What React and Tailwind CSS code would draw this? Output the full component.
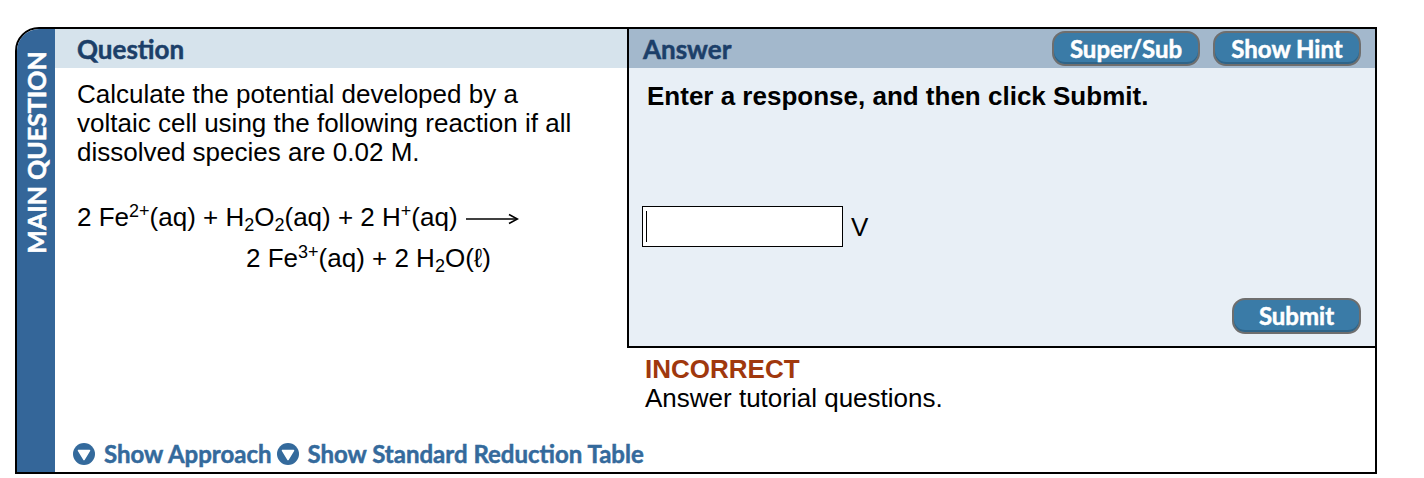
import React from "react";

const myriad = "font-['Lato','Open_Sans',sans-serif] font-bold [-webkit-text-stroke:0.5px]";
const arial = "font-['Liberation_Sans',Arial,sans-serif]";

function PillButton({ children, className = "" }) {
  return (
    <button
      className={`${myriad} flex items-center justify-center rounded-[13px] border-2 border-[#6e6e6e] bg-[#3a7ba7] text-[24px] leading-none text-white shadow-[inset_0_-2px_0_#2f6488] ${className}`}
    >
      {children}
    </button>
  );
}

function DownCircle() {
  return (
    <svg width="22" height="22" viewBox="0 0 22 22" className="shrink-0">
      <circle cx="11" cy="11" r="11" fill="#346a9c" />
      <path d="M5.5 7.5 H16.5 L11 16.5 Z" fill="#fff" stroke="#fff" strokeWidth="1.5" strokeLinejoin="round" />
    </svg>
  );
}

function LongArrow() {
  return (
    <svg width="54" height="14" viewBox="0 0 54 14" className="inline-block align-middle">
      <path d="M1 7 H52" stroke="#000" strokeWidth="1.6" />
      <path d="M44 2.5 L52.5 7 L44 11.5" fill="none" stroke="#000" strokeWidth="1.6" />
    </svg>
  );
}

export default function App() {
  return (
    <div className="min-h-screen bg-white pl-[15px] pt-[27px]">
      <div className="flex h-[447px] w-[1362px] overflow-hidden rounded-tl-[24px] border-2 border-black">
        {/* Sidebar */}
        <div className="flex w-[38px] shrink-0 items-start justify-center bg-[#346699]">
          <div className="mt-[23px] flex h-[200px] w-[38px] items-center justify-center">
            <span className={`${myriad} -rotate-90 whitespace-nowrap text-[25px] leading-none text-white`}>
              MAIN QUESTION
            </span>
          </div>
        </div>

        {/* Question column */}
        <div className="flex w-[572px] shrink-0 flex-col">
          <div className="flex h-[39px] items-center bg-[#d6e3ec] pl-[22px]">
            <h2 className={`${myriad} text-[26px] leading-none text-[#1c3f69]`}>Question</h2>
          </div>
          <div className={`${arial} pl-[22px] pt-[12px] text-[26px] leading-[29px] text-black`}>
            <p>
              Calculate the potential developed by a<br />
              voltaic cell using the following reaction if all<br />
              dissolved species are 0.02 M.
            </p>
            <div className="mt-[30px] leading-[41px]">
              <div>
                2 Fe<sup className="text-[18px]">2+</sup>(aq) + H<sub className="text-[18px]">2</sub>O
                <sub className="text-[18px]">2</sub>(aq) + 2 H<sup className="text-[18px]">+</sup>(aq){" "}
                <LongArrow />
              </div>
              <div className="pl-[169px]">
                2 Fe<sup className="text-[18px]">3+</sup>(aq) + 2 H<sub className="text-[18px]">2</sub>O(ℓ)
              </div>
            </div>
          </div>
          <div className="flex-1" />
          <div
            className={`${myriad} flex items-center gap-[2px] whitespace-nowrap pb-[6px] pl-[18px] text-[24px] leading-none text-[#346a9c]`}
          >
            <DownCircle />
            <span className="mr-[3px] pl-[7px]">Show Approach</span>
            <DownCircle />
            <span className="pl-[7px]">Show Standard Reduction Table</span>
          </div>
        </div>

        {/* Answer column */}
        <div className="flex flex-1 flex-col">
          <div className="flex h-[39px] items-center justify-between border-l-2 border-black bg-[#a3b8cc] pl-[14px] pr-[14px]">
            <h2 className={`${myriad} text-[26px] leading-none text-[#1c3f69]`}>Answer</h2>
            <div className="flex gap-[13px]">
              <PillButton className="h-[35px] w-[148px]">Super/Sub</PillButton>
              <PillButton className="h-[35px] w-[148px]">Show Hint</PillButton>
            </div>
          </div>
          <div className="flex h-[280px] flex-col border-b-2 border-l-2 border-black bg-[#e8eff6]">
            <p className={`${arial} pl-[18px] pt-[14px] text-[26px] font-bold leading-[29px] text-black`}>
              Enter a response, and then click Submit.
            </p>
            <div className="mt-[95px] flex items-center pl-[13px]">
              <div className="relative h-[41px] w-[201px] border border-black bg-white">
                <span className="absolute left-[3px] top-[4px] h-[31px] w-px bg-black" />
              </div>
              <span className={`${arial} ml-[8px] text-[26px] leading-none text-black`}>V</span>
            </div>
            <div className="mt-auto flex justify-end pb-[12px] pr-[14px]">
              <PillButton className="h-[36px] w-[129px]">Submit</PillButton>
            </div>
          </div>
          <div className={`${arial} pl-[18px] pt-[7px] text-[26px] leading-[29px]`}>
            <p className="font-bold text-[#a0380d]">INCORRECT</p>
            <p className="text-black">Answer tutorial questions.</p>
          </div>
        </div>
      </div>
    </div>
  );
}
